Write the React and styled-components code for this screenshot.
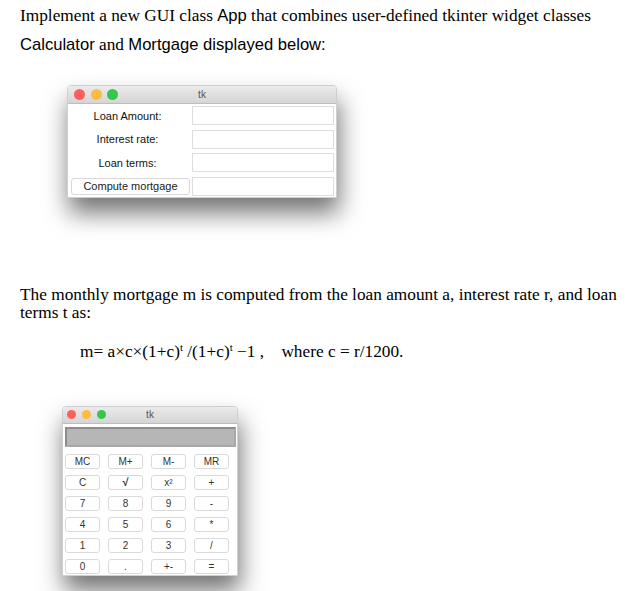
import React from 'react';
import styled, { createGlobalStyle } from 'styled-components';

const GlobalStyle = createGlobalStyle`
    html, body {
        margin: 0;
        padding: 0;
        background: #fff;
    }
    body {
        font-family: "Liberation Serif", "Times New Roman", serif;
        color: #000;
    }
`;

const calcKeys = [
    'MC', 'M+', 'M-', 'MR',
    'C', '√', 'x²', '+',
    '7', '8', '9', '-',
    '4', '5', '6', '*',
    '1', '2', '3', '/',
    '0', '.', '+-', '=',
];

const mortgageRows = ['Loan Amount:', 'Interest rate:', 'Loan terms:'];

function Window({ width, big, children }) {
    return (
        <Frame $width={width}>
            <TitleBar $big={big}>
                <Lights $big={big}>
                    <Light $big={big} $color="#fc605c" />
                    <Light $big={big} $color="#fdbc40" />
                    <Light $big={big} $color="#34c84a" />
                </Lights>
                <Title>tk</Title>
            </TitleBar>
            {children}
        </Frame>
    );
}

export default function App() {
    return (
        <Page>
            <GlobalStyle />
            <Intro>
                <Line>
                    Implement a new GUI class <Sans>App</Sans> that combines user-defined tkinter widget classes
                </Line>
                <Line>
                    <Sans>Calculator</Sans> and <Sans>Mortgage displayed below:</Sans>
                </Line>
            </Intro>

            <MortgageSlot>
                <Window width={270} big>
                    <MortgageGrid>
                        {mortgageRows.map((label) => (
                            <React.Fragment key={label}>
                                <Label>{label}</Label>
                                <Entry />
                            </React.Fragment>
                        ))}
                        <PushButton>Compute mortgage</PushButton>
                        <Entry />
                    </MortgageGrid>
                </Window>
            </MortgageSlot>

            <Paragraph>
                The monthly mortgage m is computed from the loan amount a, interest rate r, and loan
                <br />
                terms t as:
            </Paragraph>

            <Formula>
                m= a×c×(1+c)<Sup>t</Sup> /(1+c)<Sup>t</Sup> −1 ,&nbsp;&nbsp;&nbsp;&nbsp;where c = r/1200.
            </Formula>

            <CalcSlot>
                <Window width={176}>
                    <Display />
                    <KeyGrid>
                        {calcKeys.map((k) => (
                            <Key key={k} $bold={k === '√'}>{k}</Key>
                        ))}
                    </KeyGrid>
                </Window>
            </CalcSlot>
        </Page>
    );
}

const Page = styled.div`
    width: 636px;
    height: 591px;
    padding-left: 20px;
    box-sizing: border-box;
    overflow: hidden;
`;

const Intro = styled.div`
    padding-top: 1px;
    font-size: 17.3px;
    line-height: 29px;
`;

const Line = styled.div`
    white-space: nowrap;
`;

const Sans = styled.span`
    font-family: "Liberation Sans", Arial, sans-serif;
    font-size: 16.6px;
`;

const MortgageSlot = styled.div`
    margin-top: 26px;
    margin-left: 47px;
`;

const CalcSlot = styled.div`
    margin-top: 45px;
    margin-left: 42px;
`;

const Frame = styled.div`
    width: ${(p) => p.$width}px;
    background: #fff;
    border: 1px solid #cfcfcf;
    border-radius: 4px 4px 0 0;
    box-sizing: border-box;
    box-shadow: 2px 15px 24px rgba(0, 0, 0, 0.55);
    font-family: "Liberation Sans", Arial, sans-serif;
`;

const TitleBar = styled.div`
    position: relative;
    height: ${(p) => (p.$big ? 17 : 16)}px;
    display: flex;
    align-items: center;
    justify-content: center;
    background: linear-gradient(#ebebeb, #d5d5d5);
    border-bottom: 1px solid #bdbdbd;
    border-radius: 4px 4px 0 0;
`;

const Lights = styled.div`
    position: absolute;
    left: ${(p) => (p.$big ? 6 : 4)}px;
    top: 0;
    bottom: 0;
    display: flex;
    align-items: center;
    gap: ${(p) => (p.$big ? 5.5 : 6)}px;
`;

const Light = styled.span`
    width: ${(p) => (p.$big ? 11 : 9)}px;
    height: ${(p) => (p.$big ? 11 : 9)}px;
    border-radius: 50%;
    background: ${(p) => p.$color};
`;

const Title = styled.span`
    font-size: 10px;
    color: #555;
`;

const MortgageGrid = styled.div`
    display: grid;
    grid-template-columns: 122px 142px;
    grid-auto-rows: 19px;
    column-gap: 2px;
    row-gap: 4.6px;
    padding: 2px 2px 1px 0;
    align-items: center;
`;

const Label = styled.div`
    text-align: center;
    font-size: 11px;
    color: #111;
    padding-right: 3px;
`;

const Entry = styled.div`
    height: 19px;
    background: #fff;
    border: 1px solid #dedede;
    box-sizing: border-box;
`;

const PushButton = styled.div`
    height: 17px;
    margin-left: 3px;
    display: flex;
    align-items: center;
    justify-content: center;
    font-size: 11px;
    color: #222;
    background: #fff;
    border: 1px solid #d9d9d9;
    border-radius: 3px;
    box-sizing: border-box;
    white-space: nowrap;
`;

const Display = styled.div`
    height: 20px;
    margin: 3px 1px 0 2px;
    background: #b6b6b6;
    border: 2px solid #8c8c8c;
    border-right-color: #a8a8a8;
    border-bottom-color: #a8a8a8;
    box-sizing: border-box;
`;

const KeyGrid = styled.div`
    display: grid;
    grid-template-columns: repeat(4, 35px);
    grid-auto-rows: 15px;
    column-gap: 8px;
    row-gap: 6px;
    padding: 7px 0 1px 2px;
`;

const Key = styled.div`
    display: flex;
    align-items: center;
    justify-content: center;
    font-size: ${(p) => (p.$bold ? 11 : 10)}px;
    font-weight: ${(p) => (p.$bold ? 700 : 400)};
    color: #333;
    background: #fff;
    border: 1px solid #dadada;
    border-radius: 3px;
    box-sizing: border-box;
`;

const Paragraph = styled.p`
    margin: 88px 0 0;
    font-size: 17.3px;
    line-height: 18px;
    white-space: nowrap;
`;

const Formula = styled.p`
    margin: 21px 0 0 60px;
    font-size: 17.3px;
    line-height: 18px;
    white-space: nowrap;
`;

const Sup = styled.span`
    font-size: 11px;
    line-height: 0;
    vertical-align: 6px;
`;
